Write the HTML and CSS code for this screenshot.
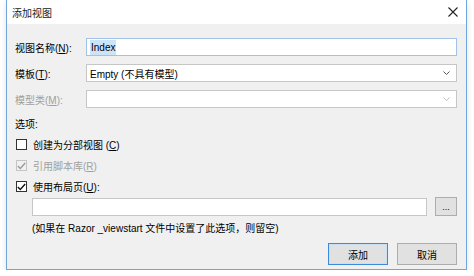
FILE: index.html
```html
<!DOCTYPE html>
<html lang="zh-CN">
<head>
  <meta charset="UTF-8">
  <title>添加视图</title>
  <link rel="stylesheet" href="styles.css">
</head>
<body>
  <div class="window">
    <div class="titlebar">
      <span class="title">添加视图</span>
      <svg class="close" width="10" height="10" viewBox="0 0 10 10"><path d="M0.5 0.5 L9.5 9.5 M9.5 0.5 L0.5 9.5" stroke="#222" stroke-width="1.1" fill="none"/></svg>
    </div>

    <div class="content">
      <div class="form-row">
        <label class="label">视图名称(<u>N</u>):</label>
        <div class="field focused"><span class="selected">Index</span></div>
      </div>
      <div class="form-row">
        <label class="label">模板(<u>T</u>):</label>
        <div class="field select">
          <span>Empty (不具有模型)</span>
          <svg class="chevron" width="7" height="4" viewBox="0 0 7 4"><path d="M0.5 0.5 L3.5 3.5 L6.5 0.5" stroke="#555" stroke-width="1" fill="none"/></svg>
        </div>
      </div>
      <div class="form-row">
        <label class="label disabled">模型类(<u>M</u>):</label>
        <div class="field select">
          <span></span>
          <svg class="chevron" width="7" height="4" viewBox="0 0 7 4"><path d="M0.5 0.5 L3.5 3.5 L6.5 0.5" stroke="#bbb" stroke-width="1" fill="none"/></svg>
        </div>
      </div>

      <div class="section-title">选项:</div>

      <div class="check-row">
        <span class="checkbox"></span>
        <span>创建为分部视图 (<u>C</u>)</span>
      </div>
      <div class="check-row disabled">
        <span class="checkbox off">
          <svg width="9" height="8" viewBox="0 0 9 8"><path d="M0.8 4 L3.3 6.5 L8.2 1" stroke="#9a9a9a" stroke-width="1.4" fill="none"/></svg>
        </span>
        <span>引用脚本库(<u>R</u>)</span>
      </div>
      <div class="check-row">
        <span class="checkbox">
          <svg width="9" height="8" viewBox="0 0 9 8"><path d="M0.8 4 L3.3 6.5 L8.2 1" stroke="#111" stroke-width="1.4" fill="none"/></svg>
        </span>
        <span>使用布局页(<u>U</u>):</span>
      </div>

      <div class="layout-row">
        <div class="field grow"></div>
        <button class="browse">...</button>
      </div>
      <div class="note">(如果在 Razor _viewstart 文件中设置了此选项，则留空)</div>

      <div class="actions">
        <button class="btn default">添加</button>
        <button class="btn">取消</button>
      </div>
    </div>
  </div>
</body>
</html>
```

FILE: styles.css
```css
body {
  margin: 0;
  background: #fff;
  font-family: "Liberation Sans", "Noto Sans CJK SC", sans-serif;
  font-size: 10px;
  color: #000;
  overflow: hidden;
}

.window {
  margin-left: 6px;
  width: 459px;
  height: 269px;
  border: 1px solid #6fa6dc;
  border-top: none;
  background: #f0f0f0;
  box-shadow: 0 2px 6px rgba(0,0,0,0.12);
  display: flex;
  flex-direction: column;
}

.titlebar {
  height: 24px;
  background: #fff;
  display: flex;
  justify-content: space-between;
  align-items: center;
  padding: 0 8px 0 5px;
}

.title {
  font-size: 10px;
  color: #222;
}

.content {
  flex: 1;
  padding: 14px 9px 0 8px;
}

.form-row {
  display: flex;
  align-items: center;
  height: 18px;
  margin-bottom: 8px;
}

.label {
  width: 71px;
  flex-shrink: 0;
}

.disabled {
  color: #a0a0a0;
}

.field {
  flex: 1;
  height: 16px;
  background: #fff;
  border: 1px solid #c6c6c6;
  display: flex;
  align-items: center;
  padding: 0 3px;
  box-sizing: content-box;
}

.field.focused {
  border-color: #9fc2e6;
}

.selected {
  background: #cce4f7;
  padding: 0 1px;
  line-height: 15px;
}

.select {
  justify-content: space-between;
  padding: 0 4px 0 3px;
}

.chevron {
  margin-right: 2px;
}

.section-title {
  margin-top: 7px;
  height: 18px;
  line-height: 18px;
}

.check-row {
  display: flex;
  align-items: center;
  height: 21px;
  gap: 6px;
  padding-left: 1px;
}

.checkbox {
  width: 11px;
  height: 11px;
  border: 1px solid #333;
  background: #fff;
  display: flex;
  align-items: center;
  justify-content: center;
  box-sizing: border-box;
}

.checkbox.off {
  border-color: #c4c4c4;
  background: #f0f0f0;
}

.layout-row {
  display: flex;
  align-items: center;
  gap: 8px;
  padding-left: 17px;
}

.grow {
  flex: 1;
  height: 16px;
}

.browse {
  width: 22px;
  height: 19px;
  border: 1px solid #adadad;
  background: #e1e1e1;
  font-size: 9px;
  padding: 0;
  line-height: 12px;
  font-family: inherit;
}

.note {
  padding-left: 17px;
  margin-top: 4px;
  height: 18px;
  line-height: 18px;
}

.actions {
  display: flex;
  justify-content: flex-end;
  gap: 9px;
  margin-top: 5px;
}

.btn {
  width: 60px;
  height: 22px;
  border: 1px solid #adadad;
  background: #e1e1e1;
  font-family: inherit;
  font-size: 10px;
  padding: 0;
  color: #000;
}

.btn.default {
  border-color: #3c8ad8;
  box-shadow: inset 0 0 0 1px #c9dff4;
}
```
